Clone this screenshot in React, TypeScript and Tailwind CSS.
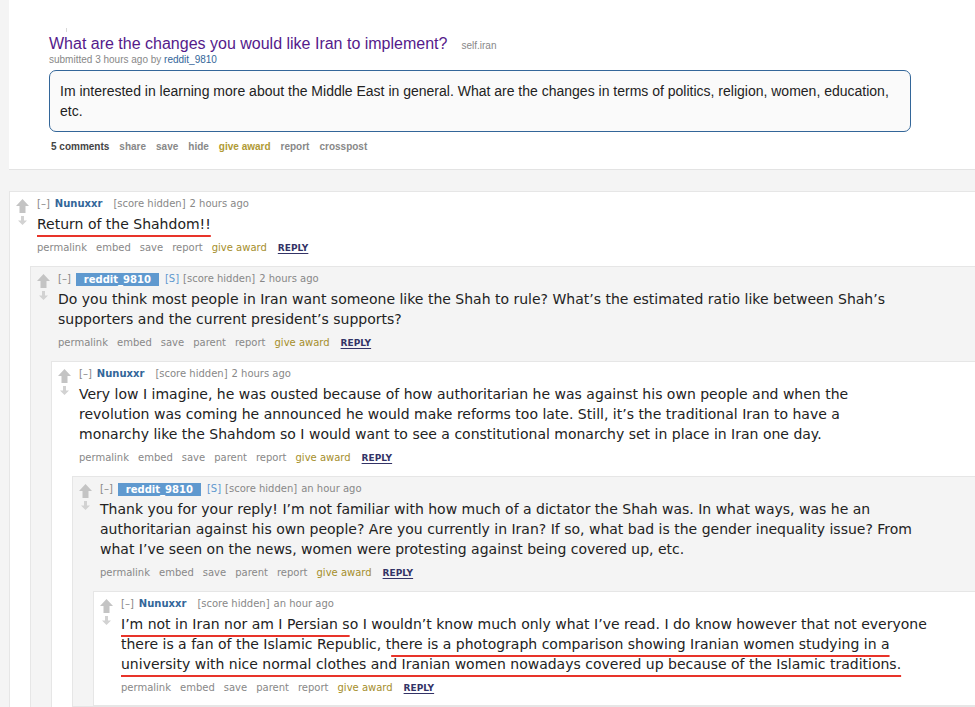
import React from "react";

type Piece = { t: string; u?: boolean };
type CommentData = {
  author: string;
  submitter?: boolean;
  time: string;
  lines: Piece[][];
  parent: boolean;
  children?: CommentData[];
};

const THREAD: CommentData = {
  author: "Nunuxxr",
  time: "2 hours ago",
  parent: false,
  lines: [[{ t: "Return of the Shahdom!!", u: true }]],
  children: [
    {
      author: "reddit_9810",
      submitter: true,
      time: "2 hours ago",
      parent: true,
      lines: [
        [{ t: "Do you think most people in Iran want someone like the Shah to rule? What’s the estimated ratio like between Shah’s" }],
        [{ t: "supporters and the current president’s supports?" }],
      ],
      children: [
        {
          author: "Nunuxxr",
          time: "2 hours ago",
          parent: true,
          lines: [
            [{ t: "Very low I imagine, he was ousted because of how authoritarian he was against his own people and when the" }],
            [{ t: "revolution was coming he announced he would make reforms too late. Still, it’s the traditional Iran to have a" }],
            [{ t: "monarchy like the Shahdom so I would want to see a constitutional monarchy set in place in Iran one day." }],
          ],
          children: [
            {
              author: "reddit_9810",
              submitter: true,
              time: "an hour ago",
              parent: true,
              lines: [
                [{ t: "Thank you for your reply! I’m not familiar with how much of a dictator the Shah was. In what ways, was he an" }],
                [{ t: "authoritarian against his own people? Are you currently in Iran? If so, what bad is the gender inequality issue? From" }],
                [{ t: "what I’ve seen on the news, women were protesting against being covered up, etc." }],
              ],
              children: [
                {
                  author: "Nunuxxr",
                  time: "an hour ago",
                  parent: true,
                  lines: [
                    [
                      { t: "I’m not in Iran nor am I Persian s", u: true },
                      { t: "o I wouldn’t know much only what I’ve read. I do know however that not everyone" },
                    ],
                    [
                      { t: "there is a fan of the Islamic Republic, t" },
                      { t: "here is a photograph comparison showing Iranian women studying in a", u: true },
                    ],
                    [
                      { t: "university with nice normal clothes and Iranian women nowadays covered up because of the Islamic traditions.", u: true },
                    ],
                  ],
                },
              ],
            },
          ],
        },
      ],
    },
  ],
};

function UpArrow() {
  return (
    <svg width="13" height="14" viewBox="0 0 13 14" className="block">
      <path d="M6.5 0 L13 7 L9.5 7 L9.5 14 L3.5 14 L3.5 7 L0 7 Z" fill="#c4c4c4" />
    </svg>
  );
}

function DownArrow() {
  return (
    <svg width="9" height="9" viewBox="0 0 9 9" className="block">
      <path d="M3 0 H6 V4.5 H9 L4.5 9 L0 4.5 H3 Z" fill="#d2d2d2" />
    </svg>
  );
}

function Comment({ c, depth }: { c: CommentData; depth: number }) {
  const bg = depth % 2 === 0 ? "bg-white" : "bg-[#f4f4f4]";
  const hasKids = !!c.children && c.children.length > 0;
  return (
    <div className={`${bg} border-t border-l border-b border-[#e6e6e6]`}>
      <div className="flex">
        {/* vote arrows */}
        <div className="w-[27px] shrink-0 pt-[7px] pl-[6px]">
          <UpArrow />
          <div className="mt-[3px] ml-[2px]">
            <DownArrow />
          </div>
        </div>

        <div className={`flex-1 pt-[5px] ${hasKids ? "pb-[11px]" : "pb-[10px]"}`}>
          {/* tagline */}
          <div className="flex items-center h-[14px] text-[10px] leading-[14px] text-[#888] font-['DejaVu_Sans',sans-serif] whitespace-nowrap">
            <span className="text-[#888]">[–]</span>
            {c.submitter ? (
              <span className="ml-[5px] bg-[#5f99cf] text-white font-bold px-[8px] h-[13px] leading-[13px]">
                {c.author}
              </span>
            ) : (
              <span className="ml-[5px] font-bold text-[#336699]">{c.author}</span>
            )}
            {c.submitter && <span className="ml-[6px] text-[#5f99cf]">[S]</span>}
            <span className={c.submitter ? "ml-[4px]" : "ml-[11px]"}>[score hidden]</span>
            <span className="ml-[4px]">{c.time}</span>
          </div>

          {/* body */}
          <div className="mt-[3px] text-[14px] leading-[20px] text-[#222] font-['DejaVu_Sans',sans-serif] whitespace-nowrap">
            {c.lines.map((line, i) => (
              <div key={i}>
                {line.map((p, j) => (
                  <span
                    key={j}
                    className={
                      p.u
                        ? "underline decoration-[#e8342a] decoration-2 underline-offset-[6px] [text-decoration-skip-ink:none]"
                        : ""
                    }
                  >
                    {p.t}
                  </span>
                ))}
              </div>
            ))}
          </div>

          {/* buttons */}
          <div className="mt-[7px] flex items-center gap-[9px] h-[14px] text-[10px] leading-[14px] text-[#888] font-['DejaVu_Sans',sans-serif] whitespace-nowrap">
            <span>permalink</span>
            <span>embed</span>
            <span>save</span>
            {c.parent && <span>parent</span>}
            <span>report</span>
            <span className="text-[#a58e2b]">give award</span>
            <span className="ml-[2px] text-[9px] font-bold text-[#336] underline underline-offset-2">REPLY</span>
          </div>
        </div>
      </div>

      {hasKids && (
        <div className="ml-[20px]">
          {c.children!.map((k, i) => (
            <Comment key={i} c={k} depth={depth + 1} />
          ))}
        </div>
      )}
    </div>
  );
}

export default function App() {
  return (
    <div className="w-[975px] h-[707px] overflow-hidden bg-[#f4f4f4] pl-[9px]">
      {/* post panel */}
      <div className="relative h-[170px] bg-white border-b border-[#e3e3e3] pl-[40px] pt-[34px] font-['Liberation_Sans',Arial,sans-serif]">
        <div className="absolute left-[57px] top-[28px] w-px h-[4px] bg-[#d8d8d8]" />
        <div className="flex items-baseline h-[20px]">
          <span className="text-[16px] leading-[20px] text-[#551a8b]">
            What are the changes you would like Iran to implement?
          </span>
          <span className="ml-[14px] text-[10px] text-[#888]">self.iran</span>
        </div>
        <div className="text-[10px] leading-[12px] text-[#888]">
          submitted 3 hours ago by <span className="text-[#369]">reddit_9810</span>
        </div>
        <div className="mt-[4px] w-[862px] rounded-[7px] border border-[#369] bg-[#fafafa] px-[10px] py-[10px] text-[14px] leading-[20px] text-[#222]">
          Im interested in learning more about the Middle East in general. What are the changes in terms of politics, religion, women, education,
          <br />
          etc.
        </div>
        <div className="mt-[9px] ml-[2px] flex items-center gap-[10px] h-[12px] text-[10px] leading-[12px] font-bold text-[#888]">
          <span className="text-[#444]">5 comments</span>
          <span>share</span>
          <span>save</span>
          <span>hide</span>
          <span className="text-[#b09a34]">give award</span>
          <span>report</span>
          <span>crosspost</span>
        </div>
      </div>

      {/* comments */}
      <div className="mt-[21px]">
        <Comment c={THREAD} depth={0} />
      </div>
    </div>
  );
}
